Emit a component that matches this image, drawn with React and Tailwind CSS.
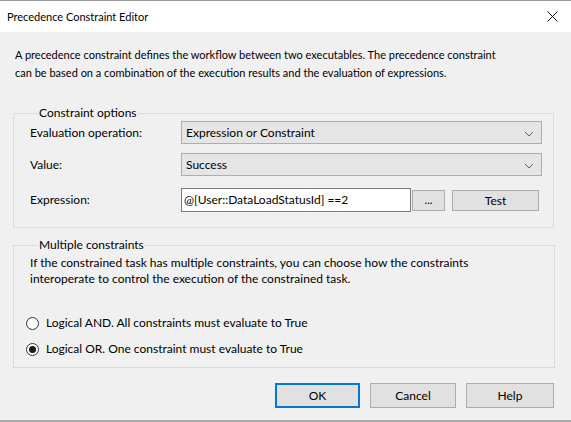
import React from "react";

const font = { fontFamily: 'Lato, "Noto Sans", sans-serif' };

function Chevron() {
  return (
    <svg width="10" height="6" viewBox="0 0 10 6" className="absolute right-[7px] top-[9px]">
      <path d="M1 1 L5 5 L9 1" fill="none" stroke="#606060" strokeWidth="1" />
    </svg>
  );
}

function Combo({ value }) {
  return (
    <div className="relative h-[23px] w-[361px] border border-[#adadad] bg-[#e5e5e5] pl-[4px] text-[12px] leading-[21px] text-black">
      {value}
      <Chevron />
    </div>
  );
}

function Radio({ checked, label }) {
  return (
    <div className="flex items-center gap-[7px] h-[18px]">
      <div className="flex h-[13px] w-[13px] items-center justify-center rounded-full border border-[#333] bg-white">
        {checked && <div className="h-[7px] w-[7px] rounded-full bg-[#1a1a1a]" />}
      </div>
      <span>{label}</span>
    </div>
  );
}

export default function App() {
  return (
    <div className="w-[571px] h-[422px] bg-[#f0f0f0] text-[12px] text-black flex flex-col border-t border-b-2 border-t-[#9a9a9a] border-b-[#a9a9a9]" style={font}>
      <div className="h-[31px] bg-white flex items-center justify-between pl-[7px] pr-[13px] shrink-0">
        <span className="text-[11px] leading-none">Precedence Constraint Editor</span>
        <svg width="11" height="11" viewBox="0 0 11 11">
          <path d="M0.5 0.5 L10.5 10.5 M10.5 0.5 L0.5 10.5" stroke="#111" strokeWidth="1" />
        </svg>
      </div>

      <p className="ml-[15px] mt-[14px] w-[530px] text-[11px] leading-[18px]">
        A precedence constraint defines the workflow between two executables. The precedence constraint
        <br />
        can be based on a combination of the execution results and the evaluation of expressions.
      </p>

      <fieldset className="ml-[13px] mt-[23px] w-[541px] h-[123px] border border-[#dcdcdc] pl-[16px]">
        <legend className="ml-[8px] px-[1px] leading-[16px]">Constraint options</legend>
        <div className="flex items-center h-[23px]">
          <span className="w-[151px]">Evaluation operation:</span>
          <Combo value="Expression or Constraint" />
        </div>
        <div className="flex items-center h-[23px] mt-[9px]">
          <span className="w-[151px]">Value:</span>
          <Combo value="Success" />
        </div>
        <div className="flex items-center h-[24px] mt-[12px]">
          <span className="w-[151px]">Expression:</span>
          <div className="h-[24px] w-[230px] border border-[#7a7a7a] bg-white pl-[2px] leading-[22px]">@[User::DataLoadStatusId] ==2</div>
          <button className="ml-[1px] h-[21px] w-[33px] border border-[#adadad] bg-[#e1e1e1] text-[11px] leading-[14px]">...</button>
          <button className="ml-[7px] h-[21px] w-[87px] border border-[#adadad] bg-[#e1e1e1] leading-[19px]">Test</button>
        </div>
      </fieldset>

      <fieldset className="ml-[13px] mt-[9px] w-[542px] h-[131px] border border-[#dcdcdc] pl-[16px]">
        <legend className="ml-[8px] px-[1px] leading-[16px]">Multiple constraints</legend>
        <p className="leading-[16px] mt-[2px]">
          If the constrained task has multiple constraints, you can choose how the constraints
          <br />
          interoperate to control the execution of the constrained task.
        </p>
        <div className="-ml-[4px] mt-[27px] flex flex-col gap-[8px]">
          <Radio label="Logical AND. All constraints must evaluate to True" />
          <Radio checked label="Logical OR. One constraint must evaluate to True" />
        </div>
      </fieldset>

      <div className="flex justify-end gap-[10px] pr-[17px] mt-[15px]">
        <button className="h-[25px] w-[85px] border-2 border-[#0078d7] bg-[#e1e1e1] leading-[21px]">OK</button>
        <button className="h-[25px] w-[86px] border border-[#adadad] bg-[#e1e1e1] leading-[23px]">Cancel</button>
        <button className="h-[25px] w-[88px] border border-[#adadad] bg-[#e1e1e1] leading-[23px]">Help</button>
      </div>
    </div>
  );
}
